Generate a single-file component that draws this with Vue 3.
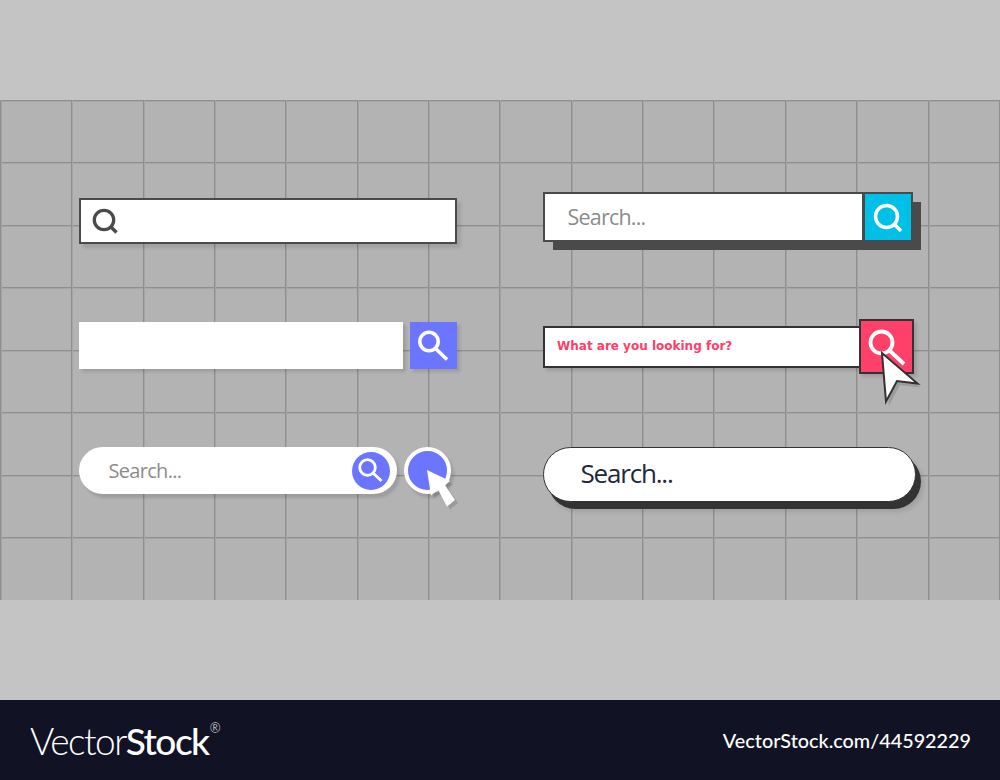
<script setup>
const gridNote = 'search bars'
</script>

<template>
  <div class="page" :data-note="gridNote">
    <div class="band"></div>
    <main class="board">
      <div class="bar-outline">
        <svg class="lens-dark" width="28" height="28" viewBox="0 0 28 28">
          <circle cx="12" cy="12" r="9.7" fill="none" stroke="#4a4a4a" stroke-width="3.3" />
          <path d="M19 19l5.500 5.500" stroke="#4a4a4a" stroke-width="3.300" fill="none" />
        </svg>
      </div>

      <div class="bar-shadowed">
        <div class="field-grey">Search...</div>
        <div class="btn-cyan">
          <svg width="30" height="30" viewBox="0 0 30 30">
            <circle cx="13.500" cy="13.500" r="11" fill="none" stroke="#fff" stroke-width="3.500" />
            <path d="M21.500 21.500l6.500 6.500" stroke="#fff" stroke-width="3.500" fill="none" />
          </svg>
        </div>
      </div>

      <div class="bar-split">
        <div class="field-plain"></div>
        <div class="btn-blue">
          <svg width="32" height="32" viewBox="0 0 32 32">
            <circle cx="12" cy="11.500" r="9.200" fill="none" stroke="#fff" stroke-width="3.500" />
            <path d="M18.500 18.500l11.500 11" stroke="#fff" stroke-width="3.600" fill="none" />
          </svg>
        </div>
      </div>

      <div class="bar-question">
        <div class="field-question">What are you looking for?</div>
        <div class="btn-pink">
          <svg width="38" height="38" viewBox="0 0 38 38">
            <circle cx="13.500" cy="13.500" r="11" fill="none" stroke="#fff" stroke-width="3.800" />
            <path d="M21.500 21.500l14.500 13.500" stroke="#fff" stroke-width="3.800" fill="none" />
          </svg>
        </div>
        <svg class="cursor-pink" width="46" height="58" viewBox="0 0 46 58">
          <path d="M4 3l35.500 30.500-20.500-2.500-11 20.500z" fill="#000" opacity=".13" transform="translate(3 4)" />
          <path d="M4 3l35.500 30.500-20.500-2.500-11 20.500z" fill="#fff" stroke="#333" stroke-width="2" />
        </svg>
      </div>

      <div class="bar-pill-row">
        <div class="pill">
          <span class="pill-text">Search...</span>
          <div class="pill-btn">
            <svg width="30" height="30" viewBox="0 0 30 30">
              <circle cx="11.500" cy="11.500" r="7.800" fill="none" stroke="#fff" stroke-width="2.800" />
              <path d="M17 17l8.500 8" stroke="#fff" stroke-width="3" fill="none" />
            </svg>
          </div>
        </div>
        <div class="round-btn">
          <svg class="cursor-white" width="34" height="42" viewBox="0 0 34 42">
            <path d="M3 2l23 11-5 4 10 15-8 6.500-9-17-7 6z" fill="#000" opacity=".13" transform="translate(3 3)" />
            <path d="M3 2l23 11-5 4 10 15-8 6.500-9-17-7 6z" fill="#fff" />
          </svg>
        </div>
      </div>

      <div class="pill-dark">Search...</div>
    </main>
    <div class="band"></div>
    <footer class="footer">
      <div class="logo"><span class="logo-light">Vector</span><span class="logo-bold">Stock</span><sup class="logo-reg">®</sup></div>
      <div class="ref">VectorStock.com/44592229</div>
    </footer>
  </div>
</template>

<style>
html, body { margin: 0; background: #c4c4c4; }
</style>

<style scoped>
.page {
  width: 1000px;
  height: 780px;
  display: flex;
  flex-direction: column;
  overflow: hidden;
  font-family: "Open Sans", "Liberation Sans", sans-serif;
}
.band { height: 100px; background: #c4c4c4; flex: none; }
.board {
  flex: none;
  box-sizing: border-box;
  height: 500px;
  padding: 92px 0 0 79px;
  display: grid;
  grid-template-columns: 378px 378px;
  grid-template-rows: 127px 128px auto;
  column-gap: 86px;
  align-items: start;
  background-color: #b3b3b3;
  background-image:
    repeating-linear-gradient(90deg, #8e8e8e 0 1px, #a4a4a4 1px 2px, transparent 2px 71.35px),
    repeating-linear-gradient(180deg, #8e8e8e 0 1px, #a6a6a6 1px 2px, transparent 2px 62.45px);
}
.bar-outline {
  box-sizing: border-box;
  height: 46px;
  margin-top: 6px;
  border: 2.500px solid #4a4a4a;
  background: #fff;
  box-shadow: 4px 4px 3px rgba(0, 0, 0, 0.1);
  display: flex;
  align-items: center;
  padding-left: 10.500px;
}
.lens-dark { display: block; margin-top: 2px; }

.bar-shadowed {
  box-sizing: border-box;
  width: 370px;
  height: 50px;
  display: flex;
  border: 2.500px solid #4a4a4a;
  background: #4a4a4a;
  box-shadow: 9px 9px 0 -1px #4a4a4a;
}
.field-grey {
  flex: 1;
  background: #fff;
  color: #8c8c8c;
  font-size: 21.500px;
  line-height: 46px;
  padding-left: 22.500px;
  letter-spacing: -0.8px;
}
.btn-cyan {
  width: 46.500px;
  margin-left: 2.500px;
  background: #00c0e8;
  display: flex;
  align-items: center;
  justify-content: center;
  padding-top: 2px;
  box-sizing: border-box;
}

.bar-split {
  margin-top: 3px;
  height: 47px;
  display: flex;
  gap: 7px;
}
.field-plain {
  width: 324px;
  background: #fff;
  box-shadow: 3px 3px 3px rgba(0, 0, 0, 0.12);
}
.btn-blue {
  width: 47.500px;
  background: #6c75ff;
  box-shadow: 3px 3px 3px rgba(0, 0, 0, 0.12);
  display: flex;
  align-items: center;
  justify-content: center;
}

.bar-question {
  position: relative;
  width: 370.500px;
  height: 55px;
  display: flex;
  align-items: center;
}
.field-question {
  box-sizing: border-box;
  width: 318px;
  height: 42px;
  border: 2px solid #333;
  background: #fff;
  box-shadow: 3px 3px 3px rgba(0, 0, 0, 0.12);
  color: #ff3d68;
  font-family: "DejaVu Sans", sans-serif;
  font-weight: 700;
  font-size: 12px;
  line-height: 37px;
  padding-left: 12px;
}
.btn-pink {
  box-sizing: border-box;
  width: 54.500px;
  height: 55px;
  margin-left: -2px;
  border: 2.500px solid #333;
  background: #ff4169;
  box-shadow: 3px 3px 3px rgba(0, 0, 0, 0.12);
  display: flex;
  padding: 8px 0 0 7px;
}
.cursor-pink {
  position: absolute;
  left: 335px;
  top: 31px;
}

.bar-pill-row {
  display: flex;
  align-items: center;
  gap: 7px;
}
.pill {
  box-sizing: border-box;
  width: 318px;
  height: 46.500px;
  border-radius: 24px;
  background: #fff;
  box-shadow: 3px 4px 3px rgba(0, 0, 0, 0.12);
  display: flex;
  align-items: center;
  justify-content: space-between;
  padding: 0 6.700px 0 29.500px;
}
.pill-text {
  color: #8c8c8c;
  font-size: 20px;
  letter-spacing: -0.7px;
  margin-top: -1px;
}
.pill-btn {
  width: 38px;
  height: 38px;
  border-radius: 50%;
  background: #6c75ff;
  display: flex;
  align-items: center;
  justify-content: center;
}
.round-btn {
  position: relative;
  box-sizing: border-box;
  width: 47px;
  height: 47px;
  border: 4px solid #fff;
  border-radius: 50%;
  background: #6c75ff;
  box-shadow: 3px 4px 3px rgba(0, 0, 0, 0.12);
}
.cursor-white {
  position: absolute;
  left: 16px;
  top: 17px;
}

.pill-dark {
  box-sizing: border-box;
  width: 373px;
  height: 55px;
  border: 1.500px solid #333;
  border-radius: 28px;
  background: #fff;
  box-shadow: 5px 7px 0 #333, 8px 10px 4px rgba(0, 0, 0, 0.1);
  color: #1d2a3d;
  font-size: 26px;
  line-height: 50px;
  padding-left: 36.500px;
  letter-spacing: -1.200px;
}

.footer {
  flex: 1;
  background: #111325;
  color: #fff;
  display: flex;
  align-items: center;
  justify-content: space-between;
  padding: 0 29px 0 30px;
  font-family: Lato, "Open Sans", sans-serif;
}
.logo { font-size: 37px; letter-spacing: -1.500px; line-height: 1; display: flex; align-items: flex-start; }
.logo-light { font-weight: 300; }
.logo-bold { font-weight: 500; }
.logo-reg { font-size: 13px; letter-spacing: 0; font-weight: 300; margin: 0 0 0 1px; line-height: 1; }
.ref { font-size: 19.800px; font-weight: 500; }
</style>
